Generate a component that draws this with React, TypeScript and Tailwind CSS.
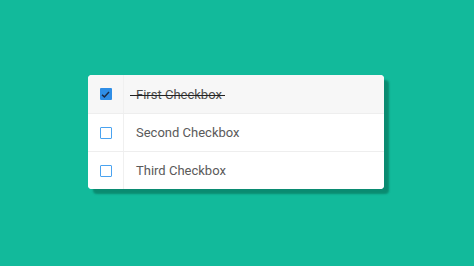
import { useState } from "react";

type Item = { label: string; done: boolean };

const initial: Item[] = [
  { label: "First Checkbox", done: true },
  { label: "Second Checkbox", done: false },
  { label: "Third Checkbox", done: false },
];

export default function App() {
  const [items, setItems] = useState(initial);

  return (
    <div className="w-[474px] h-[266px] bg-[#12ba9b] flex items-start justify-start pl-[88px] pt-[75px] font-['Roboto',sans-serif]">
      <div className="w-[296px] bg-white rounded-[4px] overflow-hidden shadow-[5px_5px_2px_rgba(0,70,50,0.4)]">
        {items.map((item, i) => (
          <div
            key={item.label}
            className={
              "flex h-[38px] items-stretch " +
              (i > 0 ? "border-t border-[#eeeeee] " : "") +
              (item.done ? "bg-[#f7f7f7]" : "bg-white")
            }
          >
            <button
              onClick={() =>
                setItems((prev) =>
                  prev.map((p, j) => (j === i ? { ...p, done: !p.done } : p))
                )
              }
              className="w-[36px] flex items-center justify-center border-r border-[#f0f0f0]"
            >
              {item.done ? (
                <span className="w-[12px] h-[12px] rounded-[1px] bg-[#2f8ee6] flex items-center justify-center">
                  <svg viewBox="0 0 12 12" className="w-[11px] h-[11px]">
                    <path d="M2.2 6.2 L4.8 8.6 L9.8 3.4" fill="none" stroke="#1b2a44" strokeWidth="1.6" />
                  </svg>
                </span>
              ) : (
                <span className="w-[12px] h-[12px] rounded-[1px] border-[1.5px] border-[#4aa3f0] bg-white" />
              )}
            </button>
            <div className="flex items-center pt-[1px] pl-[12px] text-[13px] text-[#5a5a5a]">
              {item.done ? (
                <span className="relative text-[#4a4a4a]">
                  {item.label}
                  <span className="absolute left-[-6px] right-[-3px] top-[50%] h-[1.5px] bg-[#222]" />
                </span>
              ) : (
                item.label
              )}
            </div>
          </div>
        ))}
      </div>
    </div>
  );
}
